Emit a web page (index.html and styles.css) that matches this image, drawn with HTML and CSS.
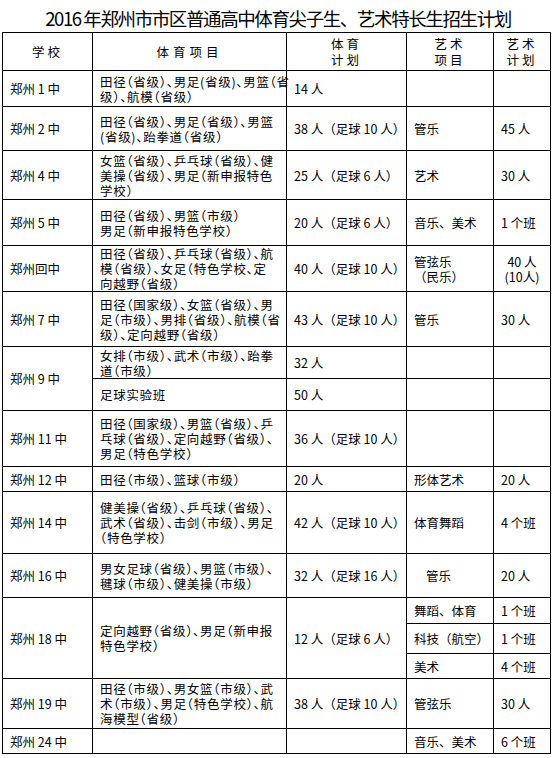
FILE: index.html
```html
<!DOCTYPE html>
<html lang="zh-CN">
<head>
<meta charset="utf-8">
<title>2016年郑州市市区普通高中体育尖子生、艺术特长生招生计划</title>
<link rel="stylesheet" href="styles.css">
</head>
<body>
<div class="page">
  <h1 class="title">2016 年郑州市市区普通高中体育尖子生、艺术特长生招生计划</h1>
  <table class="plan">
    <colgroup>
      <col class="c-school"><col class="c-sport"><col class="c-splan"><col class="c-art"><col class="c-aplan">
    </colgroup>
    <thead>
      <tr class="h-head">
        <th class="hd">学校</th>
        <th class="hd hd-wide">体育项目</th>
        <th class="hd">体育<br>计划</th>
        <th class="hd">艺术<br>项目</th>
        <th class="hd">艺术<br>计划</th>
      </tr>
    </thead>
    <tbody>
      <tr class="r1">
        <td>郑州 1 中</td>
        <td class="sp">田径（省级）、男足(省级)、男篮（省<br>级）、航模（省级）</td>
        <td>14 人</td>
        <td></td>
        <td></td>
      </tr>
      <tr class="r2">
        <td>郑州 2 中</td>
        <td class="sp">田径（省级）、男足（省级）、男篮<br>(省级)、跆拳道（省级）</td>
        <td>38 人（足球 10 人）</td>
        <td>管乐</td>
        <td>45 人</td>
      </tr>
      <tr class="r4">
        <td>郑州 4 中</td>
        <td class="sp">女篮（省级）、乒乓球（省级）、健<br>美操（省级）、男足（新申报特色<br>学校）</td>
        <td>25 人（足球 6 人）</td>
        <td>艺术</td>
        <td>30 人</td>
      </tr>
      <tr class="r5">
        <td>郑州 5 中</td>
        <td class="sp">田径（省级）、男篮（市级）<br>男足（新申报特色学校）</td>
        <td>20 人（足球 6 人）</td>
        <td>音乐、美术</td>
        <td>1 个班</td>
      </tr>
      <tr class="rh">
        <td>郑州回中</td>
        <td class="sp">田径（省级）、乒乓球（省级）、航<br>模（省级）、女足（特色学校、定<br>向越野（省级）</td>
        <td>40 人（足球 10 人）</td>
        <td>管弦乐<br>（民乐）</td>
        <td class="center">40 人<br>(10人)</td>
      </tr>
      <tr class="r7">
        <td>郑州 7 中</td>
        <td class="sp">田径（国家级）、女篮（省级）、男<br>足（市级）、男排（省级）、航模（省<br>级）、定向越野（省级）</td>
        <td>43 人（足球 10 人）</td>
        <td>管乐</td>
        <td>30 人</td>
      </tr>
      <tr class="r9a">
        <td rowspan="2">郑州 9 中</td>
        <td class="sp">女排（市级）、武术（市级）、跆拳<br>道（市级）</td>
        <td>32 人</td>
        <td></td>
        <td></td>
      </tr>
      <tr class="r9b">
        <td class="sp">足球实验班</td>
        <td>50 人</td>
        <td></td>
        <td></td>
      </tr>
      <tr class="r11">
        <td>郑州 11 中</td>
        <td class="sp">田径（国家级）、男篮（省级）、乒<br>乓球（省级）、定向越野（省级）、<br>男足（特色学校）</td>
        <td>36 人（足球 10 人）</td>
        <td></td>
        <td></td>
      </tr>
      <tr class="r12">
        <td>郑州 12 中</td>
        <td class="sp">田径（市级）、篮球（市级）</td>
        <td>20 人</td>
        <td>形体艺术</td>
        <td>20 人</td>
      </tr>
      <tr class="r14">
        <td>郑州 14 中</td>
        <td class="sp">健美操（省级）、乒乓球（省级）、<br>武术（省级）、击剑（市级）、男足<br>（特色学校）</td>
        <td>42 人（足球 10 人）</td>
        <td>体育舞蹈</td>
        <td>4 个班</td>
      </tr>
      <tr class="r16">
        <td>郑州 16 中</td>
        <td class="sp">男女足球（省级）、男篮（市级）、<br>毽球（市级）、健美操（市级）</td>
        <td>32 人（足球 16 人）</td>
        <td class="indent">管乐</td>
        <td>20 人</td>
      </tr>
      <tr class="r18a">
        <td rowspan="3">郑州 18 中</td>
        <td rowspan="3" class="sp">定向越野（省级）、男足（新申报<br>特色学校）</td>
        <td rowspan="3">12 人（足球 6 人）</td>
        <td>舞蹈、体育</td>
        <td>1 个班</td>
      </tr>
      <tr class="r18b">
        <td>科技（航空）</td>
        <td>1 个班</td>
      </tr>
      <tr class="r18c">
        <td>美术</td>
        <td>4 个班</td>
      </tr>
      <tr class="r19">
        <td>郑州 19 中</td>
        <td class="sp">田径（市级）、男女篮（市级）、武<br>术（市级）、男足（特色学校）、航<br>海模型（省级）</td>
        <td>38 人（足球 10 人）</td>
        <td>管弦乐</td>
        <td>30 人</td>
      </tr>
      <tr class="r24">
        <td>郑州 24 中</td>
        <td class="sp"></td>
        <td></td>
        <td>音乐、美术</td>
        <td>6 个班</td>
      </tr>
    </tbody>
  </table>
</div>
</body>
</html>
```
FILE: styles.css
```css
html, body {
  margin: 0;
  padding: 0;
  background: #ffffff;
}

body {
  font-family: "Noto Sans CJK SC", "Noto Sans", sans-serif;
  color: #000000;
}

.page {
  width: 552px;
  padding-left: 2px;
}

.title {
  margin: 0;
  height: 32px;
  line-height: 36px;
  font-size: 18.5px;
  font-weight: normal;
  letter-spacing: -1.4px;
  text-align: center;
  white-space: nowrap;
}

.plan {
  border-collapse: collapse;
  table-layout: fixed;
  width: 548px;
  font-size: 12.5px;
  line-height: 15px;
}

.c-school { width: 90px; }
.c-sport { width: 194px; }
.c-splan { width: 120px; }
.c-art { width: 87px; }
.c-aplan { width: 57px; }

.plan th,
.plan td {
  border: 1px solid #000000;
  padding: 0 0 0 7px;
  vertical-align: middle;
  text-align: left;
  white-space: nowrap;
  overflow: visible;
}

.plan td.sp {
  font-feature-settings: "halt" 1;
  letter-spacing: 0.7px;
}

.plan th.hd {
  font-weight: normal;
  text-align: center;
  letter-spacing: 3px;
  line-height: 16px;
  padding: 0;
}

.plan th.hd-wide {
  letter-spacing: 4px;
}

.plan td.center {
  text-align: center;
  padding: 0;
}

.plan td.indent {
  padding-left: 19px;
}

.h-head { height: 38px; }
.r1 { height: 36px; }
.r2 { height: 44px; }
.r4 { height: 49px; }
.r5 { height: 46px; }
.rh { height: 46px; }
.r7 { height: 55px; }
.r9a { height: 32px; }
.r9b { height: 32px; }
.r11 { height: 56px; }
.r12 { height: 25px; }
.r14 { height: 62px; }
.r16 { height: 44px; }
.r18a { height: 26px; }
.r18b { height: 30px; }
.r18c { height: 25px; }
.r19 { height: 50px; }
.r24 { height: 25px; }
```
